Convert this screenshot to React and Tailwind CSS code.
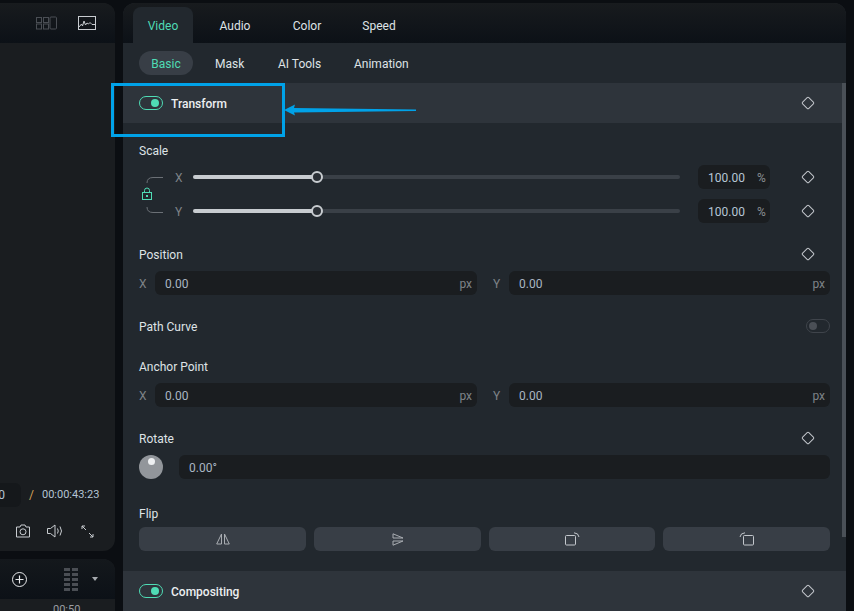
const FONT = "font-['Roboto','Noto_Sans',sans-serif]";

function Diamond() {
  return (
    <svg width="14" height="14" viewBox="0 0 14 14" fill="none" className="shrink-0">
      <rect x="2.6" y="2.6" width="8.8" height="8.8" rx="1.2" transform="rotate(45 7 7)" stroke="#c3c7cc" strokeWidth="1" />
    </svg>
  );
}

function Toggle() {
  return (
    <div className="w-6 h-[14px] rounded-full border border-[#4fdcb5] flex items-center justify-end pr-[3px] shrink-0">
      <div className="w-2 h-2 rounded-full bg-[#4fdcb5]" />
    </div>
  );
}

function Slider({ label }) {
  return (
    <div className="flex items-center h-6">
      <span className="w-[18px] text-[#7e8388] ml-[36px] pt-[2px]">{label}</span>
      <div className="w-[487px] h-1 rounded-full bg-[#3a4047] flex items-center relative">
        <div className="w-[124px] h-1 rounded-full bg-[#c8ccd0]" />
        <div className="absolute left-[118px] w-3 h-3 rounded-full bg-[#2a2f35] border-2 border-[#c8ccd0]" />
      </div>
      <div className="ml-[18px] w-[72px] h-6 rounded-md bg-[#1a1d20] flex items-center pl-[10px] pt-[2px]">
        <span className="text-[#b6c6d6] w-[39px]">100.00</span>
        <span className="text-[#8a8f94] ml-[10px]">%</span>
      </div>
      <div className="ml-[31px]"><Diamond /></div>
    </div>
  );
}

function NumInput({ className, value = "0.00", unit }) {
  return (
    <div className={`h-6 rounded-md bg-[#1a1d20] flex items-center justify-between pl-[10px] pr-[5px] pt-[2px] ${className}`}>
      <span className="text-[#a9b6c2]">{value}</span>
      {unit && <span className="text-[#7e8388]">{unit}</span>}
    </div>
  );
}

function XY() {
  return (
    <div className="flex items-center h-6">
      <span className="w-4 text-[#7e8388] pt-[2px]">X</span>
      <NumInput className="w-[322px]" unit="px" />
      <span className="ml-4 w-4 text-[#7e8388] pt-[2px]">Y</span>
      <NumInput className="w-[321px]" unit="px" />
    </div>
  );
}

function FlipBtn({ children, className = "" }) {
  return <div className={`h-6 rounded-md bg-[#383e46] flex items-center justify-center ${className}`}>{children}</div>;
}

function SectionHead({ label }) {
  return (
    <div className="h-10 shrink-0 bg-[#2e343b] flex items-center pl-4 pr-[31px]">
      <Toggle />
      <span className="ml-2 font-medium text-[#eceff1] flex-1 pt-[2px]">{label}</span>
      <Diamond />
    </div>
  );
}

export default function App() {
  return (
    <div className={`${FONT} relative w-[854px] h-[611px] overflow-hidden bg-[#0b0e12] flex gap-2 pt-[3px] text-xs`}>
      {/* left column */}
      <div className="w-[115px] shrink-0 flex flex-col gap-2">
        <div className="h-[548px] rounded-r-xl bg-[#1a1d20] overflow-hidden flex flex-col">
          <div className="h-10 shrink-0 bg-gradient-to-b from-[#181b1e] to-[#0c1117] flex items-center justify-end pr-[19px] gap-[21px]">
            <svg width="21" height="14" viewBox="0 0 21 14" fill="none" stroke="#4a4e54" strokeWidth="1">
              <rect x="0.5" y="1.5" width="5" height="5" /><rect x="7.5" y="1.5" width="5" height="5" />
              <rect x="0.5" y="8" width="5" height="5" /><rect x="7.5" y="8" width="5" height="5" />
              <rect x="14" y="1" width="6.5" height="12" rx="1" />
            </svg>
            <svg width="18" height="14" viewBox="0 0 18 14" fill="none" stroke="#c8ccd0" strokeWidth="1">
              <rect x="0.5" y="0.5" width="17" height="13" />
              <path d="M1 11 L3.5 8 L4.5 10 L6 5 L7.5 9 L9 7 L10.5 8 L12 6.5 L14 8.5 L17 8.5" />
            </svg>
          </div>
          <div className="flex-1 flex flex-col justify-end">
            <div className="flex items-center h-6 mb-[13px]">
              <div className="w-[21px] h-6 rounded-r-md bg-[#15181b] flex items-center pr-4 justify-end text-[#b4c4d4]">0</div>
              <span className="ml-2 text-[#d8a458]">/</span>
              <span className="ml-2 text-[#b4c4d4] whitespace-nowrap text-[11px]">00:00:43:23</span>
            </div>
            <div className="flex items-center h-[22px] mb-[9px] pl-4">
              <svg width="14" height="14" viewBox="0 0 14 14" fill="none" stroke="#c8ccd0" strokeWidth="1" className="shrink-0">
                <path d="M0.5 3 H4 L5 1 H9 L10 3 H13.5 V13 H0.5 Z" /><circle cx="7" cy="7.8" r="3" />
              </svg>
              <svg width="17" height="14" viewBox="0 0 17 14" fill="none" stroke="#c8ccd0" strokeWidth="1" className="ml-[17px] shrink-0">
                <path d="M0.5 4.5 H3.5 L8 1 V13 L3.5 9.5 H0.5 Z" /><path d="M10.5 4.5 Q12 7 10.5 9.5" /><path d="M13 2.5 Q16 7 13 11.5" />
              </svg>
              <svg width="13" height="13" viewBox="0 0 13 13" fill="none" stroke="#c8ccd0" strokeWidth="1" className="ml-[17px] shrink-0">
                <path d="M5 5 L1 1 M1 1 H4 M1 1 V4" /><path d="M8 8 L12 12 M12 12 H9 M12 12 V9" />
              </svg>
            </div>
          </div>
        </div>
        <div className="flex-1 rounded-tr-xl overflow-hidden bg-[#1a1d20] flex flex-col">
          <div className="h-10 shrink-0 bg-gradient-to-b from-[#14181c] to-[#0c1117] flex items-center pl-3">
            <svg width="15" height="15" viewBox="0 0 15 15" fill="none" stroke="#e8eaec" strokeWidth="1" className="shrink-0">
              <circle cx="7.5" cy="7.5" r="7" /><path d="M7.5 3.5 V11.5 M3.5 7.5 H11.5" strokeWidth="1.2" />
            </svg>
            <svg width="14" height="23" viewBox="0 0 14 23" fill="#4a4e54" className="ml-[37px] shrink-0">
              <rect x="0" y="0" width="6" height="3" /><rect x="8" y="0" width="6" height="3" />
              <rect x="0" y="5" width="6" height="3" /><rect x="8" y="5" width="6" height="3" />
              <rect x="0" y="10" width="6" height="3" /><rect x="8" y="10" width="6" height="3" />
              <rect x="0" y="15" width="6" height="3" /><rect x="8" y="15" width="6" height="3" />
              <rect x="0" y="20" width="6" height="3" /><rect x="8" y="20" width="6" height="3" />
            </svg>
            <svg width="6" height="4" viewBox="0 0 6 4" fill="#a6aaae" className="ml-[14px] shrink-0"><path d="M0 0 H6 L3 4 Z" /></svg>
          </div>
          <div className="text-[11px] leading-3 text-[#9a9ea2] pl-[53px] pt-[5px]">00:50</div>
        </div>
      </div>

      {/* right panel */}
      <div className="w-[723px] shrink-0 rounded-t-xl overflow-hidden bg-[#22282e] flex flex-col relative">
        <div className="h-10 shrink-0 bg-gradient-to-b from-[#181b1e] to-[#0c1117] flex items-end pl-[10px]">
          <div className="w-[60px] h-9 rounded-t-lg bg-[#22282e] flex items-center justify-center text-[#4fdcb5] pt-[2px]">Video</div>
          <div className="ml-[6px] w-[72px] h-9 flex items-center justify-center text-[#dfe3e6] pt-[2px]">Audio</div>
          <div className="w-[72px] h-9 flex items-center justify-center text-[#dfe3e6] pt-[2px]">Color</div>
          <div className="w-[72px] h-9 flex items-center justify-center text-[#dfe3e6] pt-[2px]">Speed</div>
        </div>
        <div className="h-10 shrink-0 flex items-center pl-4">
          <div className="w-[54px] h-6 rounded-full bg-[#383e46] flex items-center justify-center text-[#4fdcb5] pt-[2px]">Basic</div>
          <div className="ml-[22px] w-[63px] text-[#dfe3e6] pt-[2px]">Mask</div>
          <div className="w-[76px] text-[#dfe3e6] pt-[2px]">AI Tools</div>
          <div className="text-[#dfe3e6] pt-[2px]">Animation</div>
        </div>
        <SectionHead label="Transform" />
        <div className="flex-1 flex flex-col pl-4 pr-4">
          <div className="h-[18px] mt-[18px] leading-[20px] text-[#dfe3e6]">Scale</div>
          <div className="relative mt-[6px]">
            <Slider label="X" />
            <div className="h-[10px]" />
            <Slider label="Y" />
            <svg width="24" height="38" viewBox="0 0 24 38" fill="none" className="absolute left-0 top-[12px]">
              <path d="M8 6 Q8 0.5 14 0.5 H24" stroke="#6b7076" />
              <path d="M8 30 Q8 35.5 14 35.5 H24" stroke="#6b7076" />
              <rect x="3.5" y="15.5" width="9" height="7" stroke="#4fdcb5" />
              <path d="M5.5 15.5 V13.5 A2.5 2.5 0 0 1 10.5 13.5 V15.5" stroke="#4fdcb5" />
              <rect x="7" y="18" width="2" height="2" fill="#4fdcb5" />
            </svg>
          </div>
          <div className="flex items-center justify-between h-[18px] mt-[22px] text-[#dfe3e6] pr-[15px]"><span className="pt-[2px]">Position</span><Diamond /></div>
          <div className="mt-2"><XY /></div>
          <div className="flex items-center justify-between h-[18px] mt-[22px] text-[#dfe3e6]">
            <span className="pt-[2px]">Path Curve</span>
            <div className="w-6 h-[14px] rounded-full border border-[#3f444b] flex items-center pl-[2px]"><div className="w-2 h-2 rounded-full bg-[#4a4f56]" /></div>
          </div>
          <div className="h-[18px] leading-[20px] mt-[22px] text-[#dfe3e6]">Anchor Point</div>
          <div className="mt-2"><XY /></div>
          <div className="flex items-center justify-between h-[18px] mt-[22px] text-[#dfe3e6] pr-[15px]"><span className="pt-[2px]">Rotate</span><Diamond /></div>
          <div className="flex items-center mt-2 h-6">
            <div className="w-6 h-6 rounded-full bg-[#92969b] flex justify-center shrink-0 pt-[3px]">
              <div className="w-[7px] h-[7px] rounded-full bg-[#eef0f2]" />
            </div>
            <NumInput className="ml-4 flex-1" value="0.00°" />
          </div>
          <div className="h-[18px] leading-[20px] mt-[25px] text-[#dfe3e6]">Flip</div>
          <div className="flex gap-2 mt-[5px]">
            <FlipBtn className="w-[167px]">
              <svg width="14" height="12" viewBox="0 0 14 12" fill="none" stroke="#a9adb2"><path d="M5.5 1 V11 H0.7 Z" /><path d="M8.5 1 V11 H13.3 Z" /></svg>
            </FlipBtn>
            <FlipBtn className="w-[167px]">
              <svg width="12" height="13" viewBox="0 0 12 13" fill="none" stroke="#a9adb2"><path d="M1 0.8 L11 5 H1 Z" /><path d="M1 8 H11 L1 12.2 Z" /></svg>
            </FlipBtn>
            <FlipBtn className="w-[166px]">
              <svg width="15" height="14" viewBox="0 0 15 14" fill="none" stroke="#c3c7cc"><rect x="0.5" y="3.5" width="10" height="9.5" rx="1" /><path d="M9 0.8 Q13.5 1 14 5" /></svg>
            </FlipBtn>
            <FlipBtn className="w-[167px]">
              <svg width="15" height="14" viewBox="0 0 15 14" fill="none" stroke="#c3c7cc"><rect x="4.5" y="3.5" width="10" height="9.5" rx="1" /><path d="M6 0.8 Q1.5 1 1 5" /></svg>
            </FlipBtn>
          </div>
        </div>
        <SectionHead label="Compositing" />
        <div className="absolute right-0 top-20 w-1 h-[454px] bg-[#4a5057]" />
      </div>

      {/* annotation */}
      <div className="absolute left-[111px] top-[83px] w-[174px] h-[54px] border-[3px] border-[#00a2e8]" />
      <svg width="134" height="14" viewBox="0 0 134 14" className="absolute left-[284px] top-[103px]">
        <path d="M0 7 L11 1.5 L10 5 L132 6.5 V8 L10 9.5 L11 12.5 Z" fill="#00a2e8" />
      </svg>
    </div>
  );
}
